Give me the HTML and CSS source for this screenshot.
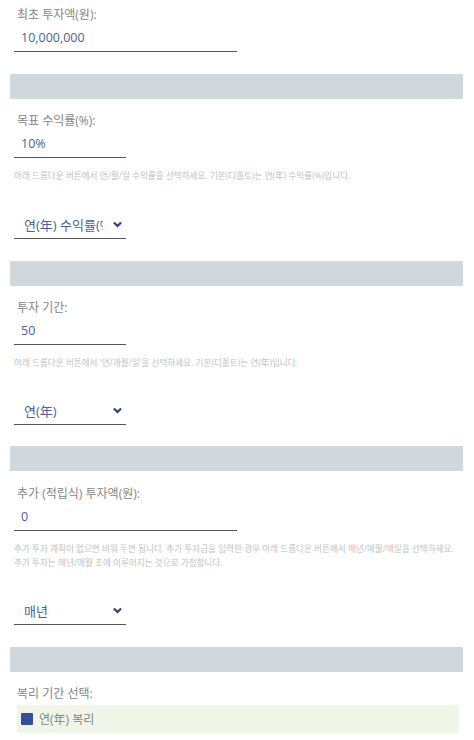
FILE: index.html
```html
<!DOCTYPE html>
<html lang="ko">
<head>
<meta charset="utf-8">
<title>복리 계산기</title>
<link rel="stylesheet" href="styles.css">
</head>
<body>
<main class="form">
  <section class="group first">
    <label class="label">최초 투자액(원):</label>
    <div class="input wide">10,000,000</div>
  </section>
  <div class="bar"></div>
  <section class="group">
    <label class="label">목표 수익률(%):</label>
    <div class="input narrow">10%</div>
    <p class="help">아래 드롭다운 버튼에서 연/월/일 수익률을 선택하세요. 기본(디폴트)는 연(年) 수익률(%)입니다.</p>
    <div class="select"><span class="select-text">연(年) 수익률(%)</span><svg class="chev" viewBox="0 0 10 7"><path d="M1 1.2 5 5.2 9 1.2" fill="none" stroke="currentColor" stroke-width="2.4"/></svg></div>
  </section>
  <div class="bar"></div>
  <section class="group">
    <label class="label">투자 기간:</label>
    <div class="input narrow">50</div>
    <p class="help">아래 드롭다운 버튼에서 '연/개월/일'을 선택하세요. 기본(디폴트)는 연(年)입니다.</p>
    <div class="select tight"><span class="select-text">연(年)</span><svg class="chev" viewBox="0 0 10 7"><path d="M1 1.2 5 5.2 9 1.2" fill="none" stroke="currentColor" stroke-width="2.4"/></svg></div>
  </section>
  <div class="bar near"></div>
  <section class="group roomy">
    <label class="label">추가 (적립식) 투자액(원):</label>
    <div class="input wide">0</div>
    <p class="help two">추가 투자 계획이 없으면 비워 두면 됩니다. 추가 투자금을 입력한 경우 아래 드롭다운 버튼에서 매년/매월/매일을 선택하세요. 추가 투자는 매년/매월 초에 이루어지는 것으로 가정합니다.</p>
    <div class="select"><span class="select-text">매년</span><svg class="chev" viewBox="0 0 10 7"><path d="M1 1.2 5 5.2 9 1.2" fill="none" stroke="currentColor" stroke-width="2.4"/></svg></div>
  </section>
  <div class="bar"></div>
  <section class="group">
    <label class="label">복리 기간 선택:</label>
    <div class="option"><span class="check"></span><span>연(年) 복리</span></div>
  </section>
</main>
</body>
</html>
```
FILE: styles.css
```css
* { box-sizing: border-box; }
html, body { margin: 0; padding: 0; background: #fff; height: 100%; overflow: hidden; }
body { font-family: "Open Sans", "Noto Sans CJK KR", sans-serif; color: #666; }
.form { padding: 0 11px 0 10px; }
.group { padding-top: 11px; }
.group.first { padding-top: 4px; }
.group.roomy { padding-top: 12px; }
.label { display: block; font-size: 12px; line-height: 22px; height: 22px; padding-left: 7px; color: #858585; }
.input { height: 26px; padding-left: 7px; line-height: 23px; font-size: 12.5px; color: #4a5f9a; border-bottom: 1px solid #555; margin-left: 4px; }
.wide { width: 223px; }
.narrow { width: 112px; }
.help { margin: 0; padding: 11px 0 0 4px; height: 52px; font-size: 8.6px; line-height: 14px; color: #c2c2c2; white-space: nowrap; }
.help.two { white-space: normal; height: 65px; padding-right: 2px; }
.select { margin-left: 4px; width: 112px; height: 29px; display: flex; align-items: center; padding: 0 4px 0 10px; border-bottom: 1px solid #555; font-size: 13px; color: #4a5f9a; }
.select.tight { height: 28px; }
.select-text { width: 79px; overflow: hidden; white-space: nowrap; flex: none; }
.chev { width: 9px; height: 7px; margin-left: auto; color: #2f3f78; }
.bar { height: 25px; margin-top: 22px; background: #d0d8db; border-radius: 1px; }
.bar.near { margin-top: 21px; }
.option { margin: 0 4px 0 7px; height: 28px; background: #eff6e8; display: flex; align-items: center; padding-left: 4px; gap: 6px; font-size: 12px; color: #858585; }
.check { width: 12px; height: 12px; background: #34509c; border-radius: 1px; flex: none; }
```
